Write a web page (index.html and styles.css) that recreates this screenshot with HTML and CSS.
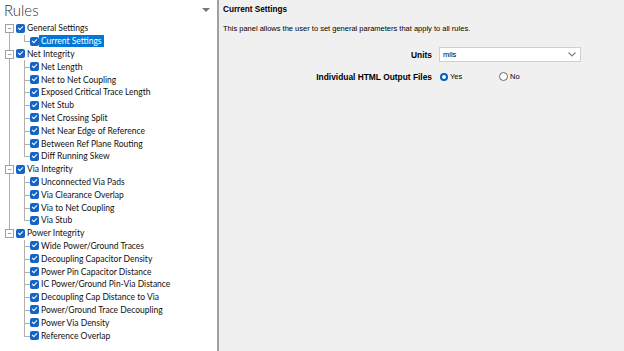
FILE: index.html
```html
<!DOCTYPE html>
<html lang="en">
<head>
    <meta charset="UTF-8">
    <title>Rules</title>
    <link rel="stylesheet" href="styles.css">
</head>
<body>
    <div class="rules">
        <div class="rules-head">
            <span class="rules-title">Rules</span>
            <span class="rules-menu"></span>
        </div>
        <div class="tree">
            <div class="row top first"><span class="exp"></span><span class="chk"></span><span class="lbl">General Settings</span></div>
            <div class="row child last"><span class="trunk"></span><span class="elbow"></span><span class="chk"></span><span class="lbl selected">Current Settings</span></div>

            <div class="row top"><span class="exp"></span><span class="chk"></span><span class="lbl">Net Integrity</span></div>
            <div class="row child"><span class="trunk"></span><span class="elbow"></span><span class="chk"></span><span class="lbl">Net Length</span></div>
            <div class="row child"><span class="trunk"></span><span class="elbow"></span><span class="chk"></span><span class="lbl">Net to Net Coupling</span></div>
            <div class="row child"><span class="trunk"></span><span class="elbow"></span><span class="chk"></span><span class="lbl">Exposed Critical Trace Length</span></div>
            <div class="row child"><span class="trunk"></span><span class="elbow"></span><span class="chk"></span><span class="lbl">Net Stub</span></div>
            <div class="row child"><span class="trunk"></span><span class="elbow"></span><span class="chk"></span><span class="lbl">Net Crossing Split</span></div>
            <div class="row child"><span class="trunk"></span><span class="elbow"></span><span class="chk"></span><span class="lbl">Net Near Edge of Reference</span></div>
            <div class="row child"><span class="trunk"></span><span class="elbow"></span><span class="chk"></span><span class="lbl">Between Ref Plane Routing</span></div>
            <div class="row child last"><span class="trunk"></span><span class="elbow"></span><span class="chk"></span><span class="lbl">Diff Running Skew</span></div>

            <div class="row top"><span class="exp"></span><span class="chk"></span><span class="lbl">Via Integrity</span></div>
            <div class="row child"><span class="trunk"></span><span class="elbow"></span><span class="chk"></span><span class="lbl">Unconnected Via Pads</span></div>
            <div class="row child"><span class="trunk"></span><span class="elbow"></span><span class="chk"></span><span class="lbl">Via Clearance Overlap</span></div>
            <div class="row child"><span class="trunk"></span><span class="elbow"></span><span class="chk"></span><span class="lbl">Via to Net Coupling</span></div>
            <div class="row child last"><span class="trunk"></span><span class="elbow"></span><span class="chk"></span><span class="lbl">Via Stub</span></div>

            <div class="row top lastgroup"><span class="exp"></span><span class="chk"></span><span class="lbl">Power Integrity</span></div>
            <div class="row child notrunk"><span class="trunk"></span><span class="elbow"></span><span class="chk"></span><span class="lbl">Wide Power/Ground Traces</span></div>
            <div class="row child notrunk"><span class="trunk"></span><span class="elbow"></span><span class="chk"></span><span class="lbl">Decoupling Capacitor Density</span></div>
            <div class="row child notrunk"><span class="trunk"></span><span class="elbow"></span><span class="chk"></span><span class="lbl">Power Pin Capacitor Distance</span></div>
            <div class="row child notrunk"><span class="trunk"></span><span class="elbow"></span><span class="chk"></span><span class="lbl">IC Power/Ground Pin-Via Distance</span></div>
            <div class="row child notrunk"><span class="trunk"></span><span class="elbow"></span><span class="chk"></span><span class="lbl">Decoupling Cap Distance to Via</span></div>
            <div class="row child notrunk"><span class="trunk"></span><span class="elbow"></span><span class="chk"></span><span class="lbl">Power/Ground Trace Decoupling</span></div>
            <div class="row child notrunk"><span class="trunk"></span><span class="elbow"></span><span class="chk"></span><span class="lbl">Power Via Density</span></div>
            <div class="row child notrunk last"><span class="trunk"></span><span class="elbow"></span><span class="chk"></span><span class="lbl">Reference Overlap</span></div>
        </div>
    </div>

    <div class="panel">
        <h2>Current Settings</h2>
        <p class="desc">This panel allows the user to set general parameters that apply to all rules.</p>

        <div class="field">
            <label class="field-name">Units</label>
            <div class="select">
                <span>mils</span>
                <svg width="8" height="5" viewBox="0 0 8 5"><path d="M0.5 0.5 L4 4 L7.5 0.5" fill="none" stroke="#808080" stroke-width="1.2"/></svg>
            </div>
        </div>

        <div class="field">
            <label class="field-name">Individual HTML Output Files</label>
            <div class="radios">
                <span class="radio on"></span><span class="radio-lbl">Yes</span>
                <span class="radio"></span><span class="radio-lbl">No</span>
            </div>
        </div>
    </div>
</body>
</html>
```

FILE: styles.css
```css
body {
    margin: 0;
    width: 624px;
    height: 351px;
    display: flex;
    overflow: hidden;
    background-color: #f0f0f0;
}
.rules {
    width: 217px;
    flex: none;
    background-color: #fff;
    border-right: 2px solid #a0a0a0;
    font-family: Lato, 'Noto Sans', sans-serif;
}
.rules-head {
    height: 21px;
    display: flex;
    justify-content: space-between;
    align-items: center;
    padding: 0 7px 0 4px;
}
.rules-title {
    font-size: 15px;
    color: #333;
    font-weight: 300;
    margin-top: -1px;
}
.rules-menu {
    width: 0;
    height: 0;
    border-left: 4px solid transparent;
    border-right: 4px solid transparent;
    border-top: 4px solid #777;
    margin-top: -2px;
}
.tree {
    padding-top: 1px;
}
.row {
    height: 12.8px;
    display: flex;
    align-items: center;
    font-size: 8.5px;
    color: #111;
    white-space: nowrap;
}
/* tree lines */
.row span.exp, .row span.trunk, .row span.elbow {
    align-self: stretch;
    position: relative;
    flex: none;
}
.exp {
    width: 16px;
}
.exp::before {
    content: '';
    position: absolute;
    left: 9px;
    top: 0;
    bottom: 0;
    border-left: 1px solid #b0b0b0;
}
.first .exp::before {
    top: 50%;
}
.lastgroup .exp::before {
    bottom: 50%;
}
.exp::after {
    content: '−';
    position: absolute;
    left: 5px;
    top: 50%;
    width: 7px;
    height: 7px;
    margin-top: -4px;
    border: 1px solid #a0a0a0;
    background-color: #fff;
    font-size: 8px;
    line-height: 6px;
    text-align: center;
    color: #555;
}
.trunk {
    width: 16px;
}
.trunk::before {
    content: '';
    position: absolute;
    left: 9px;
    top: 0;
    bottom: 0;
    border-left: 1px solid #b0b0b0;
}
.notrunk .trunk::before {
    display: none;
}
.elbow {
    width: 14px;
}
.elbow::before {
    content: '';
    position: absolute;
    left: 8px;
    top: 0;
    bottom: 0;
    border-left: 1px solid #b0b0b0;
}
.last .elbow::before {
    bottom: 50%;
}
.elbow::after {
    content: '';
    position: absolute;
    left: 8px;
    right: 0;
    top: 50%;
    border-top: 1px solid #b0b0b0;
}
.chk {
    width: 9px;
    height: 9px;
    flex: none;
    border-radius: 2px;
    background-color: #1464c8;
    position: relative;
}
.chk::after {
    content: '';
    position: absolute;
    left: 3px;
    top: 1px;
    width: 2px;
    height: 4px;
    border-right: 1px solid #fff;
    border-bottom: 1px solid #fff;
    transform: rotate(45deg);
}
.lbl {
    padding: 0 2px;
    margin-left: 0;
    line-height: 12px;
}
.lbl.selected {
    background-color: #0078d7;
    color: #fff;
}
.panel {
    flex: 1;
    padding: 0 0 0 4px;
    font-family: 'Liberation Sans', Arial, sans-serif;
    font-size: 7.5px;
    color: #000;
}
.panel h2 {
    font-size: 8.2px;
    font-weight: bold;
    margin: 6px 0 0 0;
    line-height: 8px;
}
.desc {
    margin: 10px 0 0 0;
    line-height: 9px;
}
.field {
    display: flex;
    align-items: center;
    height: 15px;
    margin-top: 14px;
}
.field + .field {
    margin-top: 7px;
}
.field-name {
    width: 209px;
    text-align: right;
    font-weight: bold;
    font-size: 8.4px;
}
.select {
    margin-left: 7px;
    width: 133px;
    height: 13px;
    background-color: #fff;
    border: 1px solid #d0d0d0;
    display: flex;
    align-items: center;
    justify-content: space-between;
    padding: 0 4px 0 3px;
}
.radios {
    margin-left: 8px;
    display: flex;
    align-items: center;
}
.radio {
    width: 7px;
    height: 7px;
    border: 1px solid #666;
    border-radius: 50%;
    background-color: #fff;
}
.radio.on {
    border: 2.5px solid #0060c0;
    width: 4px;
    height: 4px;
}
.radio-lbl {
    margin-left: 2px;
    width: 49px;
}
```
